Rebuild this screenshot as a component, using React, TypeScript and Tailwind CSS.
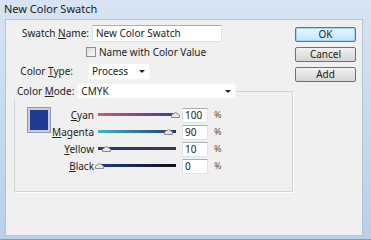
import React from "react";

const font = { fontFamily: '"Segoe UI", "Noto Sans", "Open Sans", sans-serif' };

function Btn({ label, primary }: { label: string; primary?: boolean }) {
  return (
    <div
      className={
        "h-[15px] w-[61px] rounded-[2px] border flex items-center justify-center text-[10px] text-[#222] " +
        (primary
          ? "border-[#3c7fb1] bg-gradient-to-b from-[#eaf6fd] to-[#bee6fd] shadow-[inset_0_0_0_1px_#9fd6f5]"
          : "border-[#707070] bg-gradient-to-b from-[#f2f2f2] to-[#d4d4d4]")
      }
    >
      {label}
    </div>
  );
}

function Thumb({ x }: { x: number }) {
  return (
    <svg className="absolute top-[1px]" style={{ left: x - 4 }} width="9" height="6" viewBox="0 0 9 6">
      <path d="M0.5 5.5 V3 L4.5 0.5 L8.5 3 V5.5 Z" fill="#e8e8e8" stroke="#8a8a8a" />
    </svg>
  );
}

function SliderRow({
  underline,
  rest,
  from,
  to,
  value,
  thumb,
}: {
  underline: string;
  rest: string;
  from: string;
  to: string;
  value: string;
  thumb: number;
}) {
  return (
    <div className="flex items-center h-[16px] mb-[1px]">
      <div className="w-[47px] text-right text-[10px] text-[#222] pr-[4px] whitespace-nowrap">
        <span className="underline">{underline}</span>
        {rest}
      </div>
      <div className="relative w-[78px] h-[8px]">
        <div className="absolute left-0 right-0 top-[2px] h-[3px]" style={{ background: `linear-gradient(to right, ${from}, ${to})` }} />
        <Thumb x={thumb} />
      </div>
      <div className="ml-[6px] w-[26px] h-[15px] bg-white border border-[#dfe3e8] border-t-[#abadb3] text-[10px] leading-[13px] pl-[2px] text-[#222]">
        {value}
      </div>
      <div className="ml-[6px] text-[9px] text-[#555]">%</div>
    </div>
  );
}

export default function App() {
  return (
    <div className="w-[371px] h-[240px] overflow-hidden flex flex-col bg-gradient-to-b from-[#d6e4f3] to-[#bccfe7]" style={font}>
      {/* title bar */}
      <div className="h-[19px] pl-[4px] flex items-center text-[11px] text-[#1a1a1a]">New Color Swatch</div>

      {/* client area */}
      <div className="flex-1 ml-[5px] mr-[8px] mb-[3px] bg-[#f0f0f0] border border-[#b4c5db] flex">
        <div className="w-[285px] flex flex-col">
          <div className="flex items-center mt-[5px] h-[17px]">
            <div className="w-[83px] text-right text-[10px] text-[#222] whitespace-nowrap">
              Swatch <span className="underline">N</span>ame:
            </div>
            <div className="ml-[3px] w-[130px] h-[17px] bg-white border border-[#dfe3e8] border-t-[#abadb3] text-[10px] leading-[15px] pl-[3px] text-[#222] whitespace-nowrap">
              New Color Swatch
            </div>
          </div>
          <div className="flex items-center mt-[4px] h-[12px] ml-[80px]">
            <div className="w-[10px] h-[10px] border border-[#8e8f8f] bg-gradient-to-br from-[#dcdcdc] to-[#fbfbfb]" />
            <div className="ml-[3px] text-[10px] text-[#222] whitespace-nowrap">Name with Color Value</div>
          </div>
          <div className="flex items-center mt-[5px] h-[17px]">
            <div className="w-[67px] text-right text-[10px] text-[#222] whitespace-nowrap">
              Color <span className="underline">T</span>ype:
            </div>
            <div className="ml-[15px] w-[62px] h-[17px] bg-white border border-[#f4f4f4] flex items-center justify-between pl-[3px] pr-[4px] text-[10px] text-[#222]">
              Process
              <span className="w-0 h-0 border-l-[3px] border-r-[3px] border-t-[3px] border-l-transparent border-r-transparent border-t-[#222]" />
            </div>
          </div>
          {/* group */}
          <div className="relative mt-[3px] h-[118px]">
            <div className="absolute left-[8px] top-[8px] w-[279px] h-[101px] border border-[#d5d5d5] shadow-[1px_1px_0_#ffffff]" />
            <div className="relative flex items-center h-[16px]">
              <div className="ml-[8px] pl-[3px] pr-[3px] bg-[#f0f0f0] text-[10px] text-[#222] whitespace-nowrap">
                Color <span className="underline">M</span>ode:
              </div>
              <div className="w-[159px] h-[16px] bg-white border border-[#f4f4f4] flex items-center justify-between pl-[3px] pr-[4px] text-[10px] text-[#222]">
                CMYK
                <span className="w-0 h-0 border-l-[3px] border-r-[3px] border-t-[3px] border-l-transparent border-r-transparent border-t-[#222]" />
              </div>
            </div>
            <div className="relative flex mt-[8px]">
              <div className="ml-[21px] w-[24px] h-[26px] border border-[#8d97b8] p-[2px] bg-[#c8cde0]">
                <div className="w-full h-full bg-[#1f3b93]" />
              </div>
              <div className="flex flex-col">
                <SliderRow underline="C" rest="yan" from="#d4527f" to="#3c3f8c" value="100" thumb={77} />
                <SliderRow underline="M" rest="agenta" from="#3fb4cc" to="#213a7c" value="90" thumb={70} />
                <SliderRow underline="Y" rest="ellow" from="#233a8a" to="#3a3c44" value="10" thumb={8} />
                <SliderRow underline="B" rest="lack" from="#233a8a" to="#111111" value="0" thumb={1} />
              </div>
            </div>
          </div>
        </div>
        <div className="flex flex-col gap-[5px] mt-[7px] ml-[4px]">
          <Btn label="OK" primary />
          <Btn label="Cancel" />
          <Btn label="Add" />
        </div>
      </div>
      {/* bottom edge line */}
      <div className="h-[1px] bg-[#8a9bb0]" />
    </div>
  );
}
